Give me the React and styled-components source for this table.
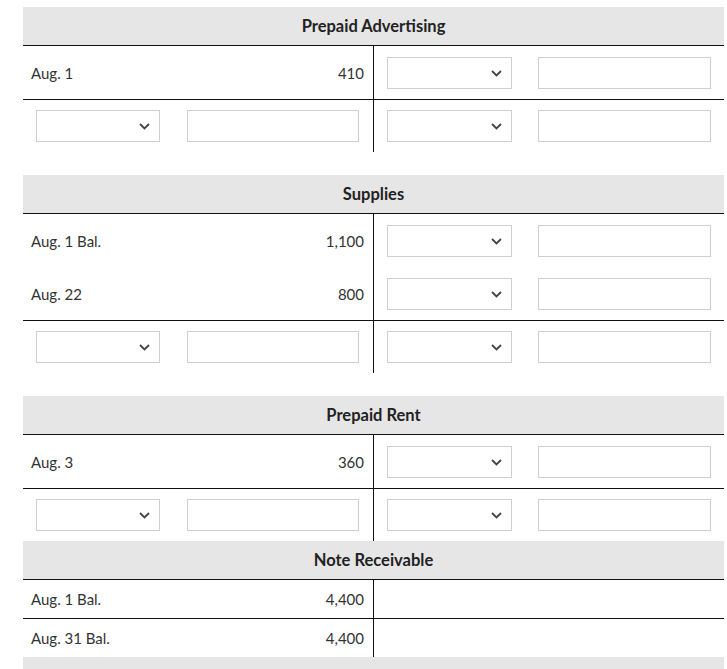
import React from "react";
import styled, { createGlobalStyle } from "styled-components";

const GlobalStyle = createGlobalStyle`
  html, body {
    margin: 0;
    padding: 0;
    background: #fff;
  }
  body {
    font-family: Lato, "Open Sans", sans-serif;
    color: #333;
  }
`;

const accounts = [
  {
    title: "Prepaid Advertising",
    entries: [{ label: "Aug. 1", amount: "410", inputs: true }],
    inputRow: true,
    gap: 23,
  },
  {
    title: "Supplies",
    entries: [
      { label: "Aug. 1 Bal.", amount: "1,100", inputs: true, noLine: true },
      { label: "Aug. 22", amount: "800", inputs: true },
    ],
    inputRow: true,
    gap: 23,
  },
  {
    title: "Prepaid Rent",
    entries: [{ label: "Aug. 3", amount: "360", inputs: true }],
    inputRow: true,
    gap: 0,
  },
  {
    title: "Note Receivable",
    entries: [
      { label: "Aug. 1 Bal.", amount: "4,400", compact: true },
      { label: "Aug. 31 Bal.", amount: "4,400", compact: true, noLine: true },
    ],
    inputRow: false,
    gap: 0,
  },
  {
    title: "",
    entries: [],
    inputRow: false,
    gap: 0,
  },
];

const Chevron = () => (
  <ChevronIcon width="11" height="7" viewBox="0 0 11 7" aria-hidden="true">
    <path d="M1 1l4.5 4.5L10 1" fill="none" stroke="#444" strokeWidth="1.8" />
  </ChevronIcon>
);

const Dropdown = ({ wide }) => (
  <SelectWrap $wide={wide}>
    <Select defaultValue="">
      <option value=""></option>
    </Select>
    <Chevron />
  </SelectWrap>
);

// debit side boxes are one pixel narrower than the credit side
const EntryPair = ({ wide }) => (
  <Inputs $wide={wide}>
    <Dropdown wide={wide} />
    <TextInput type="text" $wide={wide} />
  </Inputs>
);

const TAccount = ({ account }) => (
  <Account $gap={account.gap}>
    <Header>{account.title}</Header>
    {account.entries.map((entry, i) => (
      <Row key={i} $compact={entry.compact} $noLine={entry.noLine}>
        <Debit>
          <Label>{entry.label}</Label>
          <Amount>{entry.amount}</Amount>
        </Debit>
        <Credit>{entry.inputs && <EntryPair wide />}</Credit>
      </Row>
    ))}
    {account.inputRow && (
      <Row $noLine $input>
        <Debit>
          <EntryPair />
        </Debit>
        <Credit>
          <EntryPair wide />
        </Credit>
      </Row>
    )}
  </Account>
);

const App = () => {
  return (
    <Page>
      <GlobalStyle />
      {accounts.map((a, i) => (
        <TAccount key={i} account={a} />
      ))}
    </Page>
  );
};

export default App;

const Page = styled.div`
  padding: 7px 0 0 23px;
  width: 701px;
`;

const Account = styled.div`
  display: flex;
  flex-direction: column;
  margin-bottom: ${(p) => p.$gap}px;
`;

const Header = styled.div`
  height: 38px;
  background: #e6e6e6;
  border-bottom: 1px solid #111;
  display: flex;
  align-items: center;
  justify-content: center;
  font-size: 16.5px;
  font-weight: 700;
  color: #222;
`;

const Row = styled.div`
  display: grid;
  grid-template-columns: 351px 350px;
  height: ${(p) => (p.$compact ? 38 : p.$input ? 52 : 53)}px;
  border-bottom: ${(p) => (p.$noLine ? "none" : "1px solid #111")};
`;

const Debit = styled.div`
  display: flex;
  align-items: center;
  justify-content: space-between;
  padding: 0 9px 0 8px;
  border-right: 1px solid #111;
  font-size: 15px;
  color: #333;

  & > div {
    margin-left: 5px;
  }
`;

const Credit = styled.div`
  display: flex;
  align-items: center;
  padding: 0 13px;
`;

const Label = styled.span``;

const Amount = styled.span`
  text-align: right;
`;

const Inputs = styled.div`
  display: flex;
  align-items: center;
  gap: ${(p) => (p.$wide ? 26 : 27)}px;
`;

const SelectWrap = styled.div`
  position: relative;
  width: ${(p) => (p.$wide ? 125 : 124)}px;
  height: 32px;
`;

const Select = styled.select`
  appearance: none;
  width: 100%;
  height: 100%;
  box-sizing: border-box;
  border: 1px solid #cfcfcf;
  border-radius: 0;
  background: #fff;
  font-family: inherit;
  font-size: 15px;
`;

const ChevronIcon = styled.svg`
  position: absolute;
  right: 10px;
  top: 13px;
  pointer-events: none;
`;

const TextInput = styled.input`
  width: ${(p) => (p.$wide ? 173 : 172)}px;
  height: 32px;
  box-sizing: border-box;
  border: 1px solid #cfcfcf;
  border-radius: 0;
  background: #fff;
  font-family: inherit;
  font-size: 15px;
  padding: 0 6px;
`;
